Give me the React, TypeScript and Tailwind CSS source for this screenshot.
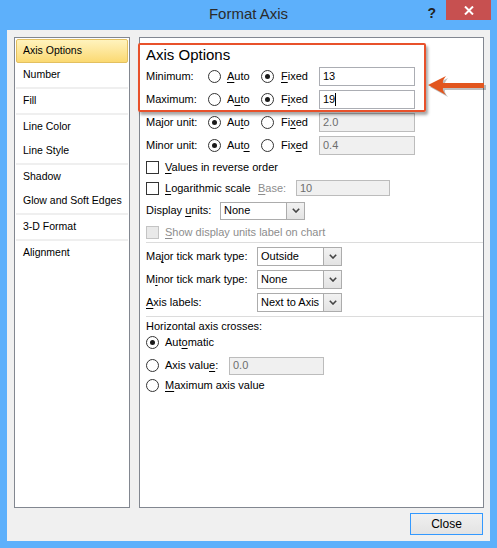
import React from 'react';

const font = "font-['Liberation_Sans',Arial,sans-serif]";

const K: React.FC<{ children: React.ReactNode }> = ({ children }) => (
  <span className="underline decoration-1 underline-offset-2">{children}</span>
);

const Radio: React.FC<{ checked?: boolean }> = ({ checked }) => (
  <span className="w-[13px] h-[13px] shrink-0 rounded-full border border-[#333333] bg-white flex items-center justify-center">
    {checked && <span className="w-[5px] h-[5px] rounded-full bg-[#1a1a1a]" />}
  </span>
);

const Check: React.FC<{ disabled?: boolean }> = ({ disabled }) => (
  <span
    className={`w-[13px] h-[13px] shrink-0 border ${
      disabled ? 'border-[#c4c4c4] bg-[#e9e9e9]' : 'border-[#333333] bg-white'
    }`}
  />
);

const Field: React.FC<{ value: string; w: string; h: string; disabled?: boolean; caret?: boolean }> = ({
  value,
  w,
  h,
  disabled,
  caret,
}) => (
  <div
    className={`${w} ${h} border flex items-center pl-[3px] text-[11px] ${
      disabled ? 'border-[#bcbcbc] bg-[#f0f0f0] text-[#6d6d6d]' : 'border-[#abadb3] bg-white text-black'
    }`}
  >
    <span>{value}</span>
    {caret && <span className="w-px h-[13px] bg-black" />}
  </div>
);

const Select: React.FC<{ value: string; h: string }> = ({ value, h }) => (
  <div className={`w-[85px] ${h} border border-[#acacac] bg-white flex`}>
    <span className="flex-1 flex items-center pl-[3px] text-[11px] text-black overflow-hidden whitespace-nowrap">
      {value}
    </span>
    <span className="w-[18px] border-l border-[#acacac] bg-gradient-to-b from-[#f2f2f2] to-[#e3e3e3] flex items-center justify-center">
      <svg width="8" height="5" viewBox="0 0 8 5">
        <polyline points="0.8,0.8 4,4 7.2,0.8" fill="none" stroke="#444444" strokeWidth="1.6" />
      </svg>
    </span>
  </div>
);

const ChoiceRow: React.FC<{
  label: string;
  auto: React.ReactNode;
  fixed: React.ReactNode;
  fixedOn: boolean;
  value: string;
  caret?: boolean;
}> = ({ label, auto, fixed, fixedOn, value, caret }) => (
  <div className="h-[23px] flex items-center">
    <span className="w-[62px]">{label}</span>
    <span className="w-[53px] flex items-center">
      <Radio checked={!fixedOn} />
      <span className="ml-[6px]">{auto}</span>
    </span>
    <span className="w-[58px] flex items-center">
      <Radio checked={fixedOn} />
      <span className="ml-[7px]">{fixed}</span>
    </span>
    <Field value={value} w="w-[96px]" h="h-[19px]" disabled={!fixedOn} caret={caret} />
  </div>
);

const categories = [
  'Axis Options',
  'Number',
  '-',
  'Fill',
  '-',
  'Line Color',
  'Line Style',
  '-',
  'Shadow',
  'Glow and Soft Edges',
  '-',
  '3-D Format',
  '-',
  'Alignment',
];

export default function App() {
  return (
    <div className={`relative w-[497px] h-[548px] bg-[#5db0fb] flex flex-col ${font} text-[11px] text-black`}>
      {/* title bar */}
      <div className="h-[30px] flex">
        <div className="flex-1" />
        <div className="flex items-center text-[15px] text-[#2b2b2b] pb-[1px]">Format Axis</div>
        <div className="flex-1 flex justify-end items-start">
          <span className="mt-[3px] mr-[10px] text-[14px] font-bold text-[#222222]">?</span>
          <span className="mr-[6px] w-[45px] h-[20px] bg-[#c75050] flex items-center justify-center">
            <svg width="10" height="9" viewBox="0 0 10 9">
              <path d="M1,0.5 L9,8.5 M9,0.5 L1,8.5" stroke="white" strokeWidth="2" />
            </svg>
          </span>
        </div>
      </div>

      {/* client area */}
      <div className="mx-[7px] h-[511px] bg-[#f0f0f0] pt-[7px] pl-[7px] flex flex-col">
        <div className="h-[471px] flex gap-[9px]">
          {/* category list */}
          <div className="w-[116px] border border-[#828790] bg-white pt-[1px] px-px flex flex-col text-[10.5px]">
            {categories.map((c, i) =>
              c === '-' ? (
                <div key={i} className="h-[2px] bg-[#efefef]" />
              ) : i === 0 ? (
                <div
                  key={i}
                  className="h-[24px] flex items-center pl-[6px] rounded-[2px] border border-[#e3c060] bg-gradient-to-b from-[#fff3bd] to-[#fbd971]"
                >
                  {c}
                </div>
              ) : (
                <div key={i} className="h-[24px] flex items-center pl-[7px]">
                  {c}
                </div>
              ),
            )}
          </div>

          {/* options panel */}
          <div className="w-[345px] border border-[#828790] bg-white pt-[6px] pl-[6px] flex flex-col">
            <div className="h-[21px] text-[15px] leading-[21px]">Axis Options</div>

            <ChoiceRow label="Minimum:" auto={<><K>A</K>uto</>} fixed={<><K>F</K>ixed</>} fixedOn value="13" />
            <ChoiceRow label="Maximum:" auto={<>A<K>u</K>to</>} fixed={<>F<K>i</K>xed</>} fixedOn value="19" caret />
            <ChoiceRow label="Major unit:" auto={<>Au<K>t</K>o</>} fixed={<>Fi<K>x</K>ed</>} fixedOn={false} value="2.0" />
            <ChoiceRow label="Minor unit:" auto={<>Aut<K>o</K></>} fixed={<>Fix<K>e</K>d</>} fixedOn={false} value="0.4" />

            <div className="h-[20px] flex items-center">
              <Check />
              <span className="ml-[6px]">
                <K>V</K>alues in reverse order
              </span>
            </div>
            <div className="h-[22px] flex items-center">
              <Check />
              <span className="ml-[6px] w-[93px]">
                <K>L</K>ogarithmic scale
              </span>
              <span className="w-[38px] text-[#8d8d8d]">
                <K>B</K>ase:
              </span>
              <Field value="10" w="w-[94px]" h="h-[16px]" disabled />
            </div>
            <div className="h-[23px] flex items-center">
              <span className="w-[74px]">
                Display <K>u</K>nits:
              </span>
              <Select value="None" h="h-[18px]" />
            </div>
            <div className="h-[20px] flex items-center">
              <Check disabled />
              <span className="ml-[6px] text-[#8d8d8d]">
                <K>S</K>how display units label on chart
              </span>
            </div>

            <div className="h-px bg-[#dcdcdc]" />

            <div className="mt-[2px] h-[23px] flex items-center">
              <span className="w-[111px]">
                Ma<K>j</K>or tick mark type:
              </span>
              <Select value="Outside" h="h-[19px]" />
            </div>
            <div className="h-[23px] flex items-center">
              <span className="w-[111px]">
                M<K>i</K>nor tick mark type:
              </span>
              <Select value="None" h="h-[19px]" />
            </div>
            <div className="h-[23px] flex items-center">
              <span className="w-[111px]">
                <K>A</K>xis labels:
              </span>
              <Select value="Next to Axis" h="h-[19px]" />
            </div>

            <div className="mt-[2px] h-px bg-[#dcdcdc]" />

            <div className="mt-px h-[17px] flex items-center">Horizontal axis crosses:</div>
            <div className="h-[15px] flex items-center">
              <Radio checked />
              <span className="ml-[6px]">
                Aut<K>o</K>matic
              </span>
            </div>
            <div className="mt-[4px] h-[23px] flex items-center">
              <Radio />
              <span className="ml-[6px] w-[64px]">
                Axis valu<K>e</K>:
              </span>
              <Field value="0.0" w="w-[95px]" h="h-[18px]" disabled />
            </div>
            <div className="h-[17px] flex items-center">
              <Radio />
              <span className="ml-[6px]">
                <K>M</K>aximum axis value
              </span>
            </div>
          </div>
        </div>

        <div className="mt-[5px] flex justify-end pr-[7px]">
          <button className="w-[73px] h-[22px] border border-[#3399ff] bg-gradient-to-b from-[#f0f0f0] to-[#e3e3e3] text-[12px] text-black">
            Close
          </button>
        </div>
      </div>

      {/* callout overlay */}
      <div className="absolute left-[138px] top-[43px] w-[288px] h-[69px] border-2 border-[#e8512b] rounded-[2px] shadow-[2px_3px_3px_rgba(0,0,0,0.35)]" />
      <svg className="absolute left-[427px] top-[75px]" width="62" height="24" viewBox="0 0 62 24">
        <path d="M3,12 L21,3 Q17,8 18,10 L59,10 L59,15 L18,15 Q17,17 21,22 Z" fill="#000000" opacity="0.25" />
        <path d="M1,10 L19,1 Q15,6 16,8 L57,8 L57,13 L16,13 Q15,15 19,20 Z" fill="#e2561e" />
      </svg>
    </div>
  );
}
